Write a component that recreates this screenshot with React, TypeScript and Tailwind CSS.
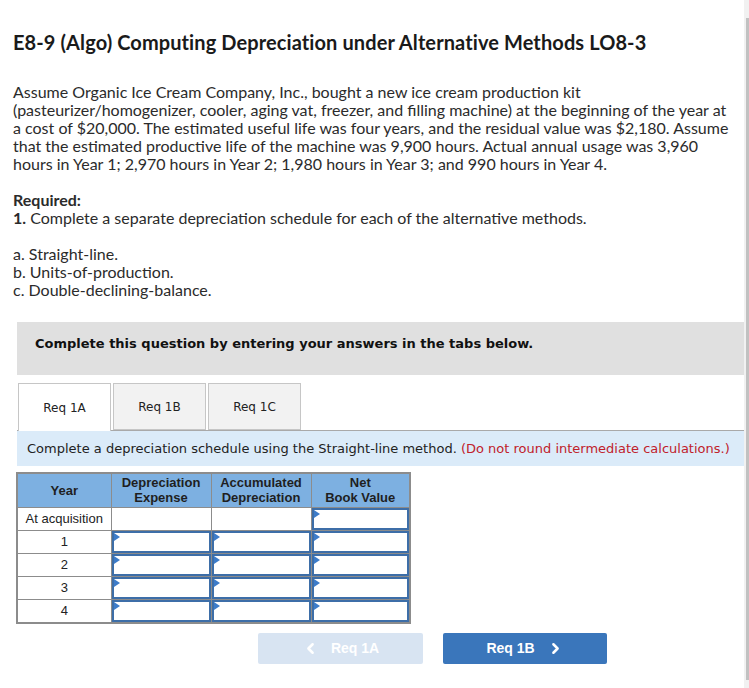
import { ChevronLeft, ChevronRight } from 'lucide-react'

const rows = ['At acquisition', '1', '2', '3', '4']

function InputCell({ show = true }: { show?: boolean }) {
  if (!show) return <td className="border border-[#8c8c8c] bg-white" />
  return (
    <td className="border border-[#8c8c8c] bg-white p-0">
      <div className="relative h-[22px] border-2 border-[#3d6ea8] bg-white">
        <span className="absolute left-0 top-0 h-0 w-0 border-y-[4px] border-l-[6px] border-y-transparent border-l-[#3d7cc9]" />
      </div>
    </td>
  )
}

export default function App() {
  return (
    <div className="flex min-h-[688px] bg-white text-[#222]">
      <div className="flex-1">
        {/* Question text */}
        <div className="pl-[13px] font-['Lato',sans-serif]">
          <h1 className="whitespace-nowrap pt-[30px] text-[20px] font-bold leading-[24px] tracking-[0.1px] text-[#1a1a1a]">
            E8-9 (Algo) Computing Depreciation under Alternative Methods LO8-3
          </h1>
          <p className="mt-[29px] whitespace-nowrap text-[16px] leading-[18px] text-[#2b2b2b]">
            Assume Organic Ice Cream Company, Inc., bought a new ice cream production kit
            <br />
            (pasteurizer/homogenizer, cooler, aging vat, freezer, and filling machine) at the beginning of the year at
            <br />
            a cost of $20,000. The estimated useful life was four years, and the residual value was $2,180. Assume
            <br />
            that the estimated productive life of the machine was 9,900 hours. Actual annual usage was 3,960
            <br />
            hours in Year 1; 2,970 hours in Year 2; 1,980 hours in Year 3; and 990 hours in Year 4.
          </p>
          <div className="mt-[18px] text-[16px] leading-[18px] text-[#2b2b2b]">
            <div className="font-bold">Required:</div>
            <div>
              <span className="font-bold">1.</span> Complete a separate depreciation schedule for each of the alternative methods.
            </div>
          </div>
          <div className="mt-[18px] text-[16px] leading-[18px] text-[#2b2b2b]">
            <div>a. Straight-line.</div>
            <div>b. Units-of-production.</div>
            <div>c. Double-declining-balance.</div>
          </div>
        </div>

        {/* Instructions box */}
        <div className="ml-[17px] mt-[23px] h-[53px] bg-[#e0e0e0] pl-[18px] pt-[14px] font-['DejaVu_Sans',sans-serif] text-[13px] font-bold leading-[16px] text-[#111]">
          Complete this question by entering your answers in the tabs below.
        </div>

        {/* Tabs */}
        <div className="ml-[17px] mt-[8px] flex gap-[2px] border-b border-[#a9a9a9] pl-[1px] font-['DejaVu_Sans',sans-serif] text-[12px]">
          <div className="-mb-px flex h-[48px] w-[93px] items-center justify-center border border-b-0 border-[#c6c6c6] bg-white">
            Req 1A
          </div>
          <div className="flex h-[47px] w-[93px] items-center justify-center border border-[#c6c6c6] bg-[#f2f2f2]">
            Req 1B
          </div>
          <div className="flex h-[47px] w-[93px] items-center justify-center border border-[#c6c6c6] bg-[#f2f2f2]">
            Req 1C
          </div>
        </div>
        <div className="ml-[17px] flex h-[35px] items-center bg-[#dbebf9] pl-[10px] font-['DejaVu_Sans',sans-serif] text-[13px] text-[#222]">
          Complete a depreciation schedule using the Straight-line method.&nbsp;
          <span className="text-[#c0212b]">(Do not round intermediate calculations.)</span>
        </div>

        {/* Schedule table */}
        <div className="ml-[16px] mt-[6px] font-['Liberation_Sans',Arial,sans-serif] text-[13px]">
          <table className="border-collapse border-2 border-[#8c8c8c]">
            <thead>
              <tr className="h-[34px] bg-[#7db0e1] font-bold leading-[15px] text-[#1f1f1f]">
                <th className="w-[94px] border border-[#8c8c8c] font-bold">Year</th>
                <th className="w-[100px] border border-[#8c8c8c] font-bold">Depreciation<br />Expense</th>
                <th className="w-[100px] border border-[#8c8c8c] font-bold">Accumulated<br />Depreciation</th>
                <th className="w-[99px] border border-[#8c8c8c] font-bold">Net<br />Book Value</th>
              </tr>
            </thead>
            <tbody>
              {rows.map((r, i) => (
                <tr key={r} className="h-[23px] leading-[15px]">
                  <td className="border border-[#8c8c8c] bg-white text-center">{r}</td>
                  <InputCell show={i > 0} />
                  <InputCell show={i > 0} />
                  <InputCell />
                </tr>
              ))}
            </tbody>
          </table>
        </div>

        {/* Navigation */}
        <div className="mt-[9px] flex gap-[20px] pl-[258px] font-['Liberation_Sans',Arial,sans-serif] text-[14px] font-bold text-white">
          <button className="flex h-[31px] w-[165px] items-center justify-center gap-[12px] rounded-[2px] bg-[#d8e4f2]">
            <ChevronLeft size={17} strokeWidth={3.5} />
            <span>Req 1A</span>
          </button>
          <button className="flex h-[31px] w-[164px] items-center justify-center gap-[12px] rounded-[2px] bg-[#3a76bb]">
            <span>Req 1B</span>
            <ChevronRight size={17} strokeWidth={3.5} />
          </button>
        </div>
      </div>

      {/* Scrollbar */}
      <div className="w-[5px] bg-[#f1f1f1] pb-[8px] pl-[2px] pt-[18px]">
        <div className="h-full bg-[#c1c1c1]" />
      </div>
    </div>
  )
}
